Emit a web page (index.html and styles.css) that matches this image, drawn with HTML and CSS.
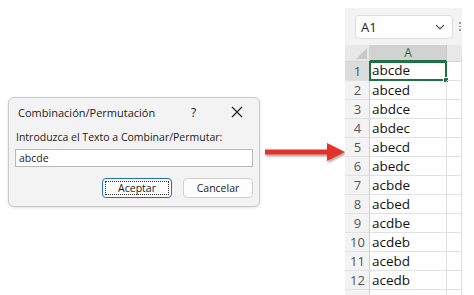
FILE: index.html
```html
<!DOCTYPE html>
<html>
<head>
<meta charset="utf-8">
<link rel="stylesheet" href="styles.css">
</head>
<body>
<div class="page">
  <div class="dialog">
    <div class="dlg-title">
      <span class="dlg-name">Combinación/Permutación</span>
      <span class="dlg-help">?</span>
      <svg class="dlg-close" width="12" height="12" viewBox="0 0 12 12"><path d="M1 1 L11 11 M11 1 L1 11" stroke="#222" stroke-width="1.2" fill="none"/></svg>
    </div>
    <div class="dlg-label">Introduzca el Texto a Combinar/Permutar:</div>
    <div class="dlg-input">abcde</div>
    <div class="dlg-buttons">
      <div class="btn btn-default"><span class="focus">Aceptar</span></div>
      <div class="btn">Cancelar</div>
    </div>
  </div>
  <svg class="arrow" width="86" height="26" viewBox="0 0 86 26">
    <defs>
      <filter id="sh" x="-10%" y="-30%" width="120%" height="170%">
        <feDropShadow dx="1" dy="2" stdDeviation="1.2" flood-color="#000" flood-opacity="0.35"/>
      </filter>
    </defs>
    <path d="M2 8.5 H64 V2 L82 11 L64 20 V13.5 H2 Z" fill="#e3302b" filter="url(#sh)"/>
  </svg>
  <div class="sheet">
    <div class="toolbar">
      <div class="namebox">
        <span>A1</span>
        <svg width="10" height="6" viewBox="0 0 10 6"><path d="M1 1 L5 5 L9 1" stroke="#555" stroke-width="1.2" fill="none"/></svg>
      </div>
      <div class="dots"><i></i><i></i><i></i></div>
    </div>
    <div class="grid">
      <div class="corner"><span class="tri"></span></div>
      <div class="colhead sel">A</div>
      <div class="colhead"></div>
      <div class="rowhead sel">1</div><div class="cell active">abcde<span class="handle"></span></div><div class="cell"></div>
      <div class="rowhead">2</div><div class="cell">abced</div><div class="cell"></div>
      <div class="rowhead">3</div><div class="cell">abdce</div><div class="cell"></div>
      <div class="rowhead">4</div><div class="cell">abdec</div><div class="cell"></div>
      <div class="rowhead">5</div><div class="cell">abecd</div><div class="cell"></div>
      <div class="rowhead">6</div><div class="cell">abedc</div><div class="cell"></div>
      <div class="rowhead">7</div><div class="cell">acbde</div><div class="cell"></div>
      <div class="rowhead">8</div><div class="cell">acbed</div><div class="cell"></div>
      <div class="rowhead">9</div><div class="cell">acdbe</div><div class="cell"></div>
      <div class="rowhead">10</div><div class="cell">acdeb</div><div class="cell"></div>
      <div class="rowhead">11</div><div class="cell">acebd</div><div class="cell"></div>
      <div class="rowhead">12</div><div class="cell">acedb</div><div class="cell"></div>
      <div class="rowhead"></div><div class="cell"></div><div class="cell"></div>
    </div>
  </div>
</div>
</body>
</html>
```

FILE: styles.css
```css
* { box-sizing: border-box; }
html, body { margin: 0; padding: 0; background: #fff; }
body { width: 474px; height: 295px; overflow: hidden; font-family: "Open Sans", "Noto Sans", sans-serif; color: #1b1b1b; }

.page { display: flex; align-items: flex-start; padding-left: 8px; }

.dialog {
  flex-shrink: 0;
  margin-top: 97px;
  width: 252px;
  height: 110px;
  background: #f3f3f3;
  border: 1px solid #c9c9c9;
  border-radius: 6px;
  box-shadow: 0 1px 3px rgba(0,0,0,0.12);
  padding: 0 6px 0 6px;
  display: flex;
  flex-direction: column;
}
.dlg-title { display: flex; align-items: center; height: 28px; padding-left: 3px; font-size: 11px; }
.dlg-name { flex: 1; }
.dlg-help { width: 12px; margin-right: 28px; font-size: 12px; }
.dlg-close { margin-right: 10px; }
.dlg-label { font-size: 10.5px; margin-top: 4px; height: 15px; line-height: 15px; padding-left: 1px; }
.dlg-input {
  margin-top: 4px;
  height: 18px;
  background: #fff;
  border: 1px solid #b9b9b9;
  font-size: 10.5px;
  line-height: 16px;
  padding-left: 3px;
}
.dlg-buttons { display: flex; justify-content: flex-end; gap: 11px; margin-top: 11px; }
.btn {
  width: 70px; height: 20px;
  background: #fdfdfd;
  border: 1px solid #d0d0d0;
  border-radius: 4px;
  font-size: 10.5px;
  display: flex; align-items: center; justify-content: center;
}
.btn-default { border: 1px solid #1e6fbf; padding: 2px; }
.btn-default .focus { flex: 1; align-self: stretch; display: flex; align-items: center; justify-content: center; border: 1px dotted #333; }

.arrow { flex-shrink: 0; margin-top: 141px; margin-left: 3px; }

.sheet { flex-shrink: 0; margin-top: 8px; margin-left: -4px; width: 117px; height: 287px; overflow: hidden; background: #f3f3f3; display: flex; flex-direction: column; }
.toolbar { flex-shrink: 0; display: flex; align-items: center; height: 37px; padding-left: 10px; }
.namebox {
  width: 98px; height: 24px;
  background: #fff;
  border: 1px solid #dcdcdc;
  border-radius: 4px;
  display: flex; align-items: center; justify-content: space-between;
  padding: 0 7px 0 5px;
  font-size: 13px;
  color: #222;
}
.dots { margin-left: 6px; display: flex; flex-direction: column; gap: 2px; }
.dots i { display: block; width: 1.5px; height: 1.5px; background: #999; }

.grid { flex-shrink: 0; display: grid; grid-template-columns: 25px 77px 15px; grid-auto-rows: 19px; grid-template-rows: 17px; background: #fff; }
.corner { background: #e8e8e8; border-right: 1px solid #d4d4d4; border-bottom: 1px solid #d4d4d4; position: relative; }
.tri { position: absolute; right: 2px; bottom: 2px; width: 0; height: 0; border-left: 11px solid transparent; border-bottom: 11px solid #c8c8c8; }
.colhead { background: #e8e8e8; border-bottom: 1px solid #d4d4d4; font-size: 12px; text-align: center; line-height: 16px; color: #444; }
.colhead.sel { background: #d2d2d2; color: #1e6b3c; border-bottom: 2px solid #1e7145; border-right: 1px solid #c8c8c8; }
.rowhead { background: #f3f3f3; border-right: 1px solid #cfcfcf; border-bottom: 1px solid #e1e1e1; font-size: 13px; color: #555; text-align: center; line-height: 18px; padding-left: 1px; }
.rowhead.sel { background: #dcdcdc; color: #1e6b3c; }
.cell { border-right: 1px solid #e1e1e1; border-bottom: 1px solid #e1e1e1; font-size: 13.5px; line-height: 18px; padding-left: 2px; color: #111; position: relative; }
.cell.active { border: 2px solid #1e7145; line-height: 15px; padding-left: 1px; margin-left: -1px; margin-top: -1px; }
.handle { position: absolute; right: -4px; bottom: -4px; width: 6px; height: 6px; background: #1e7145; border: 1px solid #fff; }
```
